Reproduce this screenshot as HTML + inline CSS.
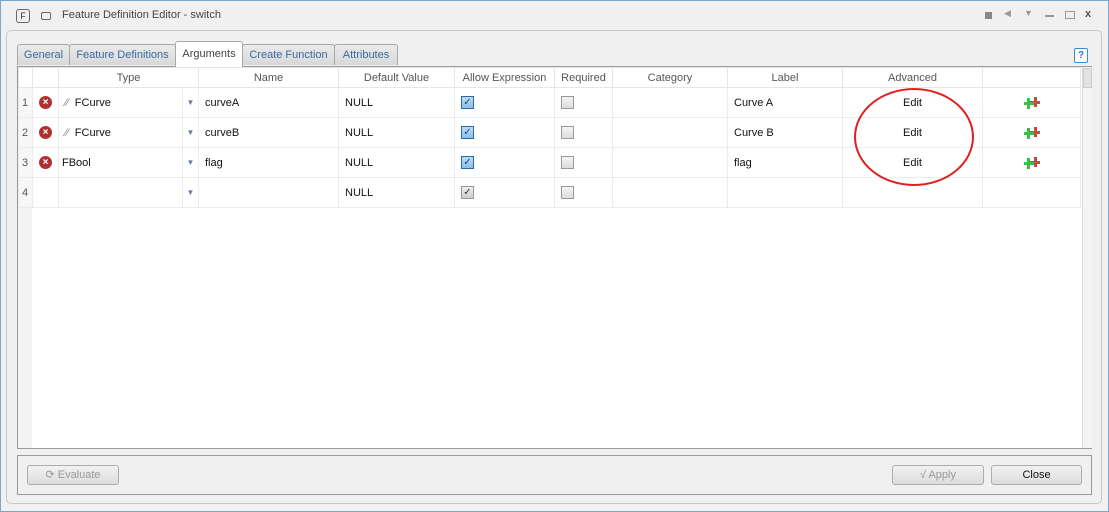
<!DOCTYPE html><html><head><style>
body{margin:0;width:1109px;height:512px;background:#f0f0f0;font-family:"Liberation Sans",sans-serif;font-size:11px;position:relative;overflow:hidden}
.a{position:absolute}
.tab{position:absolute;top:44px;height:21px;border:1px solid #a8a8a8;border-bottom:none;background:linear-gradient(#eaeaea,#d8d8d8);color:#3b6aa0;font-size:11px;line-height:21px;text-align:center;border-radius:3px 3px 0 0;box-sizing:border-box}
table{position:absolute;left:18px;top:67px;border-collapse:collapse;table-layout:fixed;background:#fff}
td{border:1px solid #ececec;height:29px;padding:0 6px;color:#111;white-space:nowrap;overflow:hidden}
tr.h td{height:19px;color:#555;text-align:center;background:#fff;border-color:#e6e6e6}
td.n{color:#555;padding:0 3px;background:#f7f7f7}
.cb{display:inline-block;width:11px;height:11px;border:1px solid #2d6aa8;background:linear-gradient(#bcdcf5,#8cc0ea);color:#1e3c8a;font-size:10px;line-height:11px;text-align:center;vertical-align:middle}
.cb.g{border-color:#999;background:linear-gradient(#eee,#ccc);color:#333}
.cb.e{border-color:#999;background:linear-gradient(#f4f4f4,#ddd)}
.x{display:inline-block;width:13px;height:13px;border-radius:50%;background:#b03030;color:#fff;font-size:10px;line-height:13px;text-align:center;font-weight:bold}
.dd{color:#6a7aa0;font-size:8px;text-align:center;padding:0}
.btn{position:absolute;top:465px;height:20px;border:1px solid #adadad;border-radius:3px;background:linear-gradient(#f2f2f2,#dcdcdc);box-sizing:border-box;text-align:center;line-height:18px;font-size:11px}
.pl{position:relative;display:inline-block;width:16px;height:12px;vertical-align:middle}
.pl i{position:absolute;display:block}
</style></head><body>
<div class="a" style="left:0;top:0;width:1109px;height:512px;border:1px solid #7aa6d6;box-sizing:border-box"></div>
<div class="a" style="left:16px;top:9px;width:12px;height:12px;border:1px solid #666;border-radius:3px;font-size:9px;line-height:12px;text-align:center;color:#333">F</div>
<div class="a" style="left:41px;top:12px;width:8px;height:6px;border:1px solid #666;border-radius:2px"></div>
<div class="a" style="left:62px;top:9px;color:#444;font-size:11px">Feature Definition Editor - switch</div>
<div class="a" style="left:985px;top:12px;width:7px;height:7px;background:#888"></div>
<div class="a" style="left:1004px;top:8px;color:#999;font-size:9px">◀</div>
<div class="a" style="left:1024px;top:8px;color:#999;font-size:9px">▼</div>
<div class="a" style="left:1045px;top:15px;width:9px;height:2px;background:#999"></div>
<div class="a" style="left:1065px;top:11px;width:8px;height:6px;border:1px solid #999"></div>
<div class="a" style="left:1085px;top:8px;color:#555;font-size:11px;font-weight:bold">x</div>
<div class="a" style="left:6px;top:30px;width:1096px;height:474px;border:1px solid #c8c8c8;border-radius:5px;box-sizing:border-box"></div>
<div class="tab" style="left:17px;width:53px">General</div>
<div class="tab" style="left:69px;width:107px">Feature Definitions</div>
<div class="tab" style="left:175px;top:41px;height:26px;width:68px;background:#fff;color:#444;line-height:24px;z-index:2">Arguments</div>
<div class="tab" style="left:242px;width:93px">Create Function</div>
<div class="tab" style="left:334px;width:64px">Attributes</div>
<div class="a" style="left:1074px;top:48px;width:12px;height:13px;border:1px solid #3b8ad8;border-radius:2px;color:#2a7ad0;font-weight:bold;font-size:10px;text-align:center;line-height:13px;background:#fff">?</div>
<div class="a" style="left:17px;top:66px;width:1075px;height:383px;border:1px solid #9a9a9a;background:#fff;box-sizing:border-box"></div>
<div class="a" style="left:18px;top:87px;width:14px;height:361px;background:#f3f3f3"></div>
<div class="a" style="left:1082px;top:67px;width:9px;height:381px;background:#f4f4f4;border-left:1px solid #ddd"><div style="margin-top:1px;height:18px;background:#e2e2e2;border:1px solid #ccc"></div></div>
<table>
<colgroup><col style="width:14px"><col style="width:26px"><col style="width:124px"><col style="width:16px"><col style="width:140px"><col style="width:116px"><col style="width:100px"><col style="width:58px"><col style="width:115px"><col style="width:115px"><col style="width:140px"><col style="width:98px"></colgroup>
<tr class="h"><td class="n" style="background:#fff"></td><td></td><td colspan="2">Type</td><td>Name</td><td>Default Value</td><td>Allow Expression</td><td>Required</td><td>Category</td><td>Label</td><td>Advanced</td><td></td></tr>
<tr><td class="n">1</td><td><span class="x">×</span></td><td><span style="color:#888">⁄⁄</span>&nbsp; FCurve</td><td class="dd">▼</td><td>curveA</td><td>NULL</td><td><span class="cb">✓</span></td><td><span class="cb e"></span></td><td></td><td>Curve A</td><td style="text-align:center">Edit</td><td style="text-align:center"><span class="pl"><i style="left:6px;top:4px;width:10px;height:3px;background:#c44"></i><i style="left:10px;top:0;width:3px;height:10px;background:#c44"></i><i style="left:0;top:5px;width:10px;height:3px;background:#4b4"></i><i style="left:3px;top:1px;width:3px;height:11px;background:#4b4"></i></span></td></tr>
<tr><td class="n">2</td><td><span class="x">×</span></td><td><span style="color:#888">⁄⁄</span>&nbsp; FCurve</td><td class="dd">▼</td><td>curveB</td><td>NULL</td><td><span class="cb">✓</span></td><td><span class="cb e"></span></td><td></td><td>Curve B</td><td style="text-align:center">Edit</td><td style="text-align:center"><span class="pl"><i style="left:6px;top:4px;width:10px;height:3px;background:#c44"></i><i style="left:10px;top:0;width:3px;height:10px;background:#c44"></i><i style="left:0;top:5px;width:10px;height:3px;background:#4b4"></i><i style="left:3px;top:1px;width:3px;height:11px;background:#4b4"></i></span></td></tr>
<tr><td class="n">3</td><td><span class="x">×</span></td><td style="padding-left:3px">FBool</td><td class="dd">▼</td><td>flag</td><td>NULL</td><td><span class="cb">✓</span></td><td><span class="cb e"></span></td><td></td><td>flag</td><td style="text-align:center">Edit</td><td style="text-align:center"><span class="pl"><i style="left:6px;top:4px;width:10px;height:3px;background:#c44"></i><i style="left:10px;top:0;width:3px;height:10px;background:#c44"></i><i style="left:0;top:5px;width:10px;height:3px;background:#4b4"></i><i style="left:3px;top:1px;width:3px;height:11px;background:#4b4"></i></span></td></tr>
<tr><td class="n">4</td><td></td><td></td><td class="dd">▼</td><td></td><td>NULL</td><td><span class="cb g">✓</span></td><td><span class="cb e"></span></td><td></td><td></td><td></td><td></td></tr>
</table>
<div class="a" style="left:854px;top:88px;width:120px;height:98px;border:2px solid #e02020;border-radius:50%;box-sizing:border-box"></div>
<div class="a" style="left:17px;top:455px;width:1075px;height:40px;border:1px solid #9a9a9a;box-sizing:border-box"></div>
<div class="btn" style="left:27px;width:92px;color:#999">⟳ Evaluate</div>
<div class="btn" style="left:892px;width:92px;color:#999">√ Apply</div>
<div class="btn" style="left:991px;width:91px;color:#111">Close</div>
</body></html>
